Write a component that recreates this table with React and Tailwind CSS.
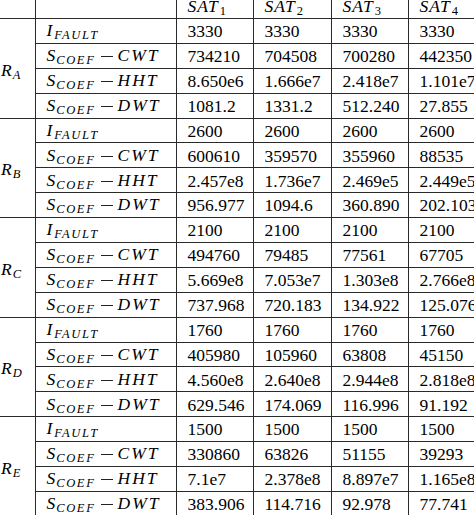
const groups = [
  {
    r: "A",
    rows: [
      ["3330", "3330", "3330", "3330"],
      ["734210", "704508", "700280", "442350"],
      ["8.650e6", "1.666e7", "2.418e7", "1.101e7"],
      ["1081.2", "1331.2", "512.240", "27.855"],
    ],
  },
  {
    r: "B",
    rows: [
      ["2600", "2600", "2600", "2600"],
      ["600610", "359570", "355960", "88535"],
      ["2.457e8", "1.736e7", "2.469e5", "2.449e5"],
      ["956.977", "1094.6", "360.890", "202.103"],
    ],
  },
  {
    r: "C",
    rows: [
      ["2100", "2100", "2100", "2100"],
      ["494760", "79485", "77561", "67705"],
      ["5.669e8", "7.053e7", "1.303e8", "2.766e8"],
      ["737.968", "720.183", "134.922", "125.076"],
    ],
  },
  {
    r: "D",
    rows: [
      ["1760", "1760", "1760", "1760"],
      ["405980", "105960", "63808", "45150"],
      ["4.560e8", "2.640e8", "2.944e8", "2.818e8"],
      ["629.546", "174.069", "116.996", "91.192"],
    ],
  },
  {
    r: "E",
    rows: [
      ["1500", "1500", "1500", "1500"],
      ["330860", "63826", "51155", "39293"],
      ["7.1e7", "2.378e8", "8.897e7", "1.165e8"],
      ["383.906", "114.716", "92.978", "77.741"],
    ],
  },
];

// math-style subscript, a bit wider like computer modern
function Sub({ children, upright }) {
  return (
    <span
      className={
        "align-[-3px] text-[12.5px] " +
        (upright ? "not-italic pl-[1px]" : "italic tracking-[0.13em]")
      }
    >
      {children}
    </span>
  );
}

function Minus() {
  return <span className="inline-block align-middle w-[12px] h-px bg-[#222] ml-[6px] mr-[4px] mb-[1px]" />;
}

function Label({ i }) {
  if (i === 0) {
    return (
      <span className="italic">
        <span className="pr-[2px]">I</span>
        <Sub>FAULT</Sub>
      </span>
    );
  }
  const method = ["CWT", "HHT", "DWT"][i - 1];
  return (
    <span>
      <span className="italic pr-[1px]">S</span>
      <Sub>COEF</Sub>
      <Minus />
      <span className="italic tracking-[0.12em]">{method}</span>
    </span>
  );
}

const cell = "border border-[#2a2a2a] h-[24.9px] px-[11px] align-middle text-left pt-[2px] whitespace-nowrap";

export default function App() {
  return (
    <div
      className="w-[474px] h-[515px] overflow-hidden bg-white text-black text-[17.5px] leading-none"
      style={{ fontFamily: '"Liberation Serif", "DejaVu Serif", serif' }}
    >
      <table className="-mt-[7px] border-collapse table-fixed w-[525px]">
        <colgroup>
          <col className="w-[35px]" />
          <col className="w-[141px]" />
          <col className="w-[77px]" />
          <col className="w-[78px]" />
          <col className="w-[77px]" />
          <col className="w-[117px]" />
        </colgroup>
        <thead>
          <tr>
            <th className="border-r border-b border-[#2a2a2a] h-[25px]"></th>
            <th className={cell + " border-t-0"}></th>
            {[1, 2, 3, 4].map((n) => (
              <th key={n} className={cell + " font-normal h-[25px] pt-[4px]"}>
                <span className="italic tracking-[0.05em]">SAT</span>
                <Sub upright>{n}</Sub>
              </th>
            ))}
          </tr>
        </thead>
        <tbody>
          {groups.map((g) =>
            g.rows.map((row, i) => (
              <tr key={g.r + i}>
                {i === 0 && (
                  <td
                    rowSpan={4}
                    className="border-y border-r border-[#2a2a2a] align-middle pl-[1px] pt-[6px] whitespace-nowrap"
                  >
                    <span className="italic pr-[1px]">R</span>
                    <Sub>{g.r}</Sub>
                  </td>
                )}
                <td className={cell}>
                  <Label i={i} />
                </td>
                {row.map((v, j) => (
                  <td key={j} className={cell}>
                    {v}
                  </td>
                ))}
              </tr>
            ))
          )}
        </tbody>
      </table>
    </div>
  );
}
